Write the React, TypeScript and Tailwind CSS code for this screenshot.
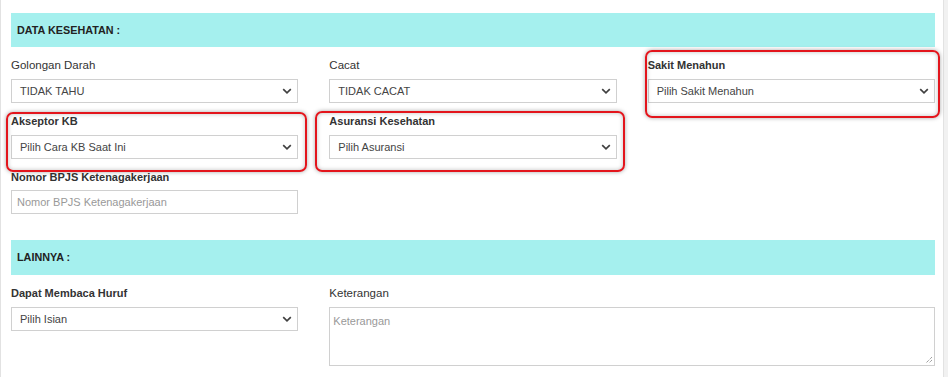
function Chevron() {
  return (
    <svg width="10" height="6" viewBox="0 0 10 6" className="shrink-0">
      <path d="M1.2 1.2 L5 4.8 L8.8 1.2" fill="none" stroke="#404040" strokeWidth="1.7" />
    </svg>
  );
}

function Label({ text, bold }: { text: string; bold?: boolean }) {
  return (
    <div className={`h-[14px] leading-[14px] mb-[7px] text-[#333] whitespace-nowrap ${bold ? "font-bold text-[11px]" : "text-[11.5px]"}`}>
      {text}
    </div>
  );
}

function SelectBox({ value }: { value: string }) {
  return (
    <div className="h-[24px] border border-[#d0d0d0] bg-white flex items-center justify-between pl-[8px] pr-[5px] text-[11px] text-[#444]">
      <span>{value}</span>
      <Chevron />
    </div>
  );
}

function Field({ label, value, bold }: { label: string; value: string; bold?: boolean }) {
  return (
    <div>
      <Label text={label} bold={bold} />
      <SelectBox value={value} />
    </div>
  );
}

function SectionHeader({ title, h }: { title: string; h: string }) {
  return (
    <div className={`${h} bg-[#a5f0ee] flex items-center pl-[6px] text-[10.8px] font-bold text-[#222]`}>
      {title}
    </div>
  );
}

export default function App() {
  return (
    <div className="relative w-[948px] h-[377px] overflow-hidden bg-[#f1f1f1] font-['Liberation_Sans',Arial,sans-serif]">
      <div className="w-[944px] h-full bg-white border-l border-r border-[#e2e2e2] pl-[10px] pr-[8px] pt-[13px]">
        {/* Data Kesehatan */}
        <SectionHeader title="DATA KESEHATAN :" h="h-[34px]" />
        <div className="grid grid-cols-3 gap-x-[31px] gap-y-[11px] mt-[11px]">
          <Field label="Golongan Darah" value="TIDAK TAHU" />
          <Field label="Cacat" value="TIDAK CACAT" />
          <Field label="Sakit Menahun" value="Pilih Sakit Menahun" bold />
          <Field label="Akseptor KB" value="Pilih Cara KB Saat Ini" bold />
          <Field label="Asuransi Kesehatan" value="Pilih Asuransi" bold />
          <div />
          <div>
            <div className="h-[14px] leading-[14px] mb-[6px] text-[11px] font-bold text-[#333]">
              Nomor BPJS Ketenagakerjaan
            </div>
            <div className="h-[24px] border border-[#d0d0d0] flex items-center pl-[5px] text-[11px] text-[#999]">
              Nomor BPJS Ketenagakerjaan
            </div>
          </div>
        </div>

        {/* Lainnya */}
        <div className="mt-[26px]">
          <SectionHeader title="LAINNYA :" h="h-[35px]" />
        </div>
        <div className="grid grid-cols-3 gap-x-[31px] mt-[11px]">
          <Field label="Dapat Membaca Huruf" value="Pilih Isian" bold />
          <div className="col-span-2">
            <Label text="Keterangan" />
            <div className="relative h-[59px] border border-[#d0d0d0] pl-[3px] pt-[5px] text-[11px] text-[#999]">
              Keterangan
              <svg width="8" height="8" viewBox="0 0 8 8" className="absolute right-[1px] bottom-[1px]">
                <path d="M7 1 L1 7 M7 4 L4 7" stroke="#777" strokeWidth="1" strokeDasharray="1 1" />
              </svg>
            </div>
          </div>
        </div>
      </div>

      {/* highlight annotations */}
      <div className="absolute left-[6px] top-[112px] w-[301px] h-[60px] rounded-[7px] border-2 border-[#e3151c] shadow-[0_0_4px_rgba(0,0,0,0.35),inset_0_0_4px_rgba(0,0,0,0.25)]" />
      <div className="absolute left-[315px] top-[111px] w-[310px] h-[61px] rounded-[7px] border-2 border-[#e3151c] shadow-[0_0_4px_rgba(0,0,0,0.35),inset_0_0_4px_rgba(0,0,0,0.25)]" />
      <div className="absolute left-[645px] top-[50px] w-[295px] h-[68px] rounded-[7px] border-2 border-[#e3151c] shadow-[0_0_4px_rgba(0,0,0,0.35),inset_0_0_4px_rgba(0,0,0,0.25)]" />
    </div>
  );
}
